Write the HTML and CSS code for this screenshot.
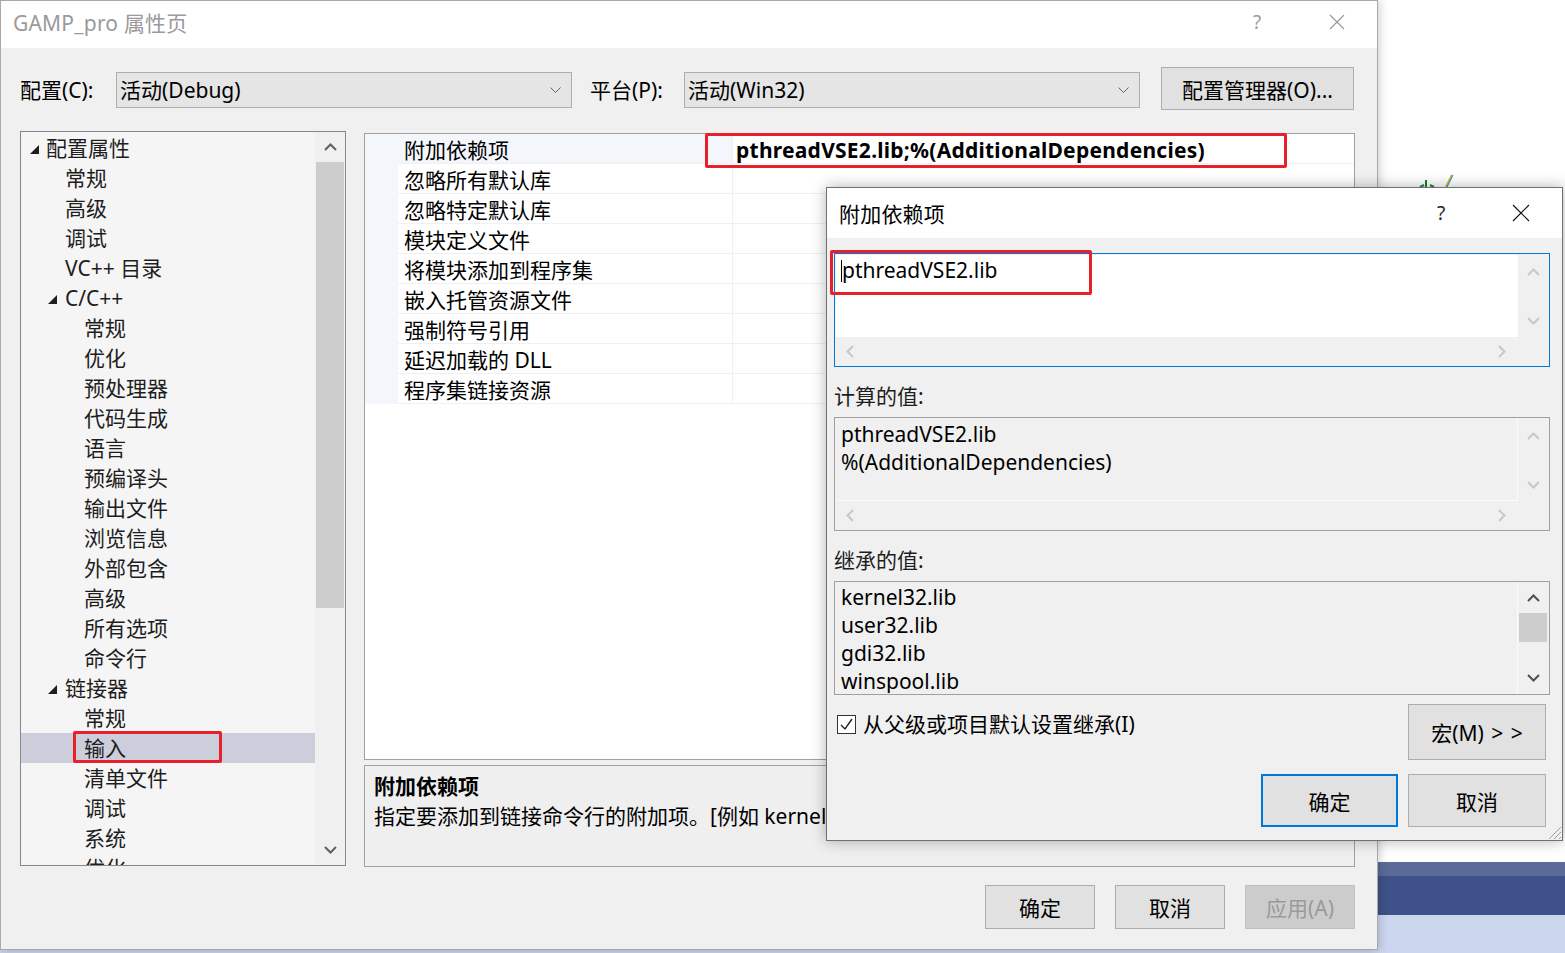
FILE: index.html
```html
<!DOCTYPE html>
<html lang="zh-CN">
<head>
  <meta charset="UTF-8" />
  <title>GAMP_pro 属性页</title>
  <link rel="stylesheet" href="styles.css">
</head>
<body>
<div class="desk">
  <svg class="desk-mark" width="40" height="16" viewBox="0 0 40 16">
    <path d="M4 15 L8 13" stroke="#1f8a3a" stroke-width="2" />
    <path d="M10 8 L10 15" stroke="#1a7a30" stroke-width="2" />
    <path d="M14 13 L18 15" stroke="#1f8a3a" stroke-width="2" />
    <path d="M30 15 L36 3" stroke="#c6b81e" stroke-width="2" />
    <path d="M31 15 L37 3" stroke="#2a8fd0" stroke-width="1" />
  </svg>
  <div class="desk-band"></div>

  <!-- 属性页 -->
  <div class="win win-main">
    <div class="titlebar">
      <span class="title dim">GAMP_pro 属性页</span>
      <span class="tb-help dim">?</span>
      <span class="tb-close">
        <svg width="16" height="16" viewBox="0 0 16 16"><path d="M1 1 L15 15 M15 1 L1 15" stroke="#9a9a9a" stroke-width="1.2" /></svg>
      </span>
    </div>

    <div class="config-row">
      <span class="cfg-label">配置(C):</span>
      <div class="combo">
        <span>活动(Debug)</span>
        <svg width="11" height="7" viewBox="0 0 11 7"><path d="M0.5 0.5 L5.5 5.5 L10.5 0.5" fill="none" stroke="#606060" /></svg>
      </div>
      <span class="cfg-label plat">平台(P):</span>
      <div class="combo">
        <span>活动(Win32)</span>
        <svg width="11" height="7" viewBox="0 0 11 7"><path d="M0.5 0.5 L5.5 5.5 L10.5 0.5" fill="none" stroke="#606060" /></svg>
      </div>
      <button class="btn btn-mgr">配置管理器(O)...</button>
    </div>

    <div class="main-area">
      <div class="tree">
        <ul class="tree-list">
          <li class="lv0"><i class="tri"></i>配置属性</li>
          <li class="lv1">常规</li>
          <li class="lv1">高级</li>
          <li class="lv1">调试</li>
          <li class="lv1">VC++ 目录</li>
          <li class="lv1 open"><i class="tri"></i>C/C++</li>
          <li class="lv2">常规</li>
          <li class="lv2">优化</li>
          <li class="lv2">预处理器</li>
          <li class="lv2">代码生成</li>
          <li class="lv2">语言</li>
          <li class="lv2">预编译头</li>
          <li class="lv2">输出文件</li>
          <li class="lv2">浏览信息</li>
          <li class="lv2">外部包含</li>
          <li class="lv2">高级</li>
          <li class="lv2">所有选项</li>
          <li class="lv2">命令行</li>
          <li class="lv1 open"><i class="tri"></i>链接器</li>
          <li class="lv2">常规</li>
          <li class="lv2 sel">输入</li>
          <li class="lv2">清单文件</li>
          <li class="lv2">调试</li>
          <li class="lv2">系统</li>
          <li class="lv2">优化</li>
        </ul>
        <div class="vscroll">
          <div class="sb-btn">
            <svg width="13" height="8" viewBox="0 0 13 8"><path d="M1 7 L6.5 1.5 L12 7" fill="none" stroke="#606060" stroke-width="2" /></svg>
          </div>
          <div class="sb-thumb tall"></div>
          <div class="sb-track"></div>
          <div class="sb-btn">
            <svg width="13" height="8" viewBox="0 0 13 8"><path d="M1 1 L6.5 6.5 L12 1" fill="none" stroke="#606060" stroke-width="2" /></svg>
          </div>
        </div>
      </div>

      <div class="right-col">
        <div class="grid">
          <div class="grid-row sel">
            <div class="gutter"></div>
            <div class="name">附加依赖项</div>
            <div class="val">pthreadVSE2.lib;%(AdditionalDependencies)</div>
          </div>
          <div class="grid-row"><div class="gutter"></div><div class="name">忽略所有默认库</div><div class="val"></div></div>
          <div class="grid-row"><div class="gutter"></div><div class="name">忽略特定默认库</div><div class="val"></div></div>
          <div class="grid-row"><div class="gutter"></div><div class="name">模块定义文件</div><div class="val"></div></div>
          <div class="grid-row"><div class="gutter"></div><div class="name">将模块添加到程序集</div><div class="val"></div></div>
          <div class="grid-row"><div class="gutter"></div><div class="name">嵌入托管资源文件</div><div class="val"></div></div>
          <div class="grid-row"><div class="gutter"></div><div class="name">强制符号引用</div><div class="val"></div></div>
          <div class="grid-row"><div class="gutter"></div><div class="name">延迟加载的 DLL</div><div class="val"></div></div>
          <div class="grid-row"><div class="gutter"></div><div class="name">程序集链接资源</div><div class="val"></div></div>
        </div>
        <div class="desc">
          <div class="desc-title">附加依赖项</div>
          <div class="desc-text">指定要添加到链接命令行的附加项。[例如 kernel32.lib]</div>
        </div>
      </div>
    </div>

    <div class="footer">
      <button class="btn btn-foot">确定</button>
      <button class="btn btn-foot">取消</button>
      <button class="btn btn-foot disabled">应用(A)</button>
    </div>
  </div>

  <!-- 附加依赖项 对话框 -->
  <div class="win win-sub">
    <div class="titlebar sub-bar">
      <span class="title">附加依赖项</span>
      <span class="tb-help">?</span>
      <span class="tb-close">
        <svg width="18" height="18" viewBox="0 0 18 18"><path d="M1 1 L17 17 M17 1 L1 17" stroke="#111" stroke-width="1.2" /></svg>
      </span>
    </div>
    <div class="sub-body">
      <div class="lbox focus">
        <div class="lbox-text"><span class="caret"></span>pthreadVSE2.lib</div>
        <div class="lbox-v">
          <svg width="13" height="8" viewBox="0 0 13 8"><path d="M1 7 L6.5 1.5 L12 7" fill="none" stroke="#c8c8c8" stroke-width="2" /></svg>
          <svg width="13" height="8" viewBox="0 0 13 8"><path d="M1 1 L6.5 6.5 L12 1" fill="none" stroke="#c8c8c8" stroke-width="2" /></svg>
        </div>
        <div class="lbox-h">
          <svg width="8" height="13" viewBox="0 0 8 13"><path d="M7 1 L1.5 6.5 L7 12" fill="none" stroke="#c8c8c8" stroke-width="2" /></svg>
          <svg width="8" height="13" viewBox="0 0 8 13"><path d="M1 1 L6.5 6.5 L1 12" fill="none" stroke="#c8c8c8" stroke-width="2" /></svg>
        </div>
      </div>

      <div class="sub-label">计算的值:</div>
      <div class="lbox ro">
        <div class="lbox-text">pthreadVSE2.lib<br>%(AdditionalDependencies)</div>
        <div class="lbox-v">
          <svg width="13" height="8" viewBox="0 0 13 8"><path d="M1 7 L6.5 1.5 L12 7" fill="none" stroke="#c8c8c8" stroke-width="2" /></svg>
          <svg width="13" height="8" viewBox="0 0 13 8"><path d="M1 1 L6.5 6.5 L12 1" fill="none" stroke="#c8c8c8" stroke-width="2" /></svg>
        </div>
        <div class="lbox-h">
          <svg width="8" height="13" viewBox="0 0 8 13"><path d="M7 1 L1.5 6.5 L7 12" fill="none" stroke="#c8c8c8" stroke-width="2" /></svg>
          <svg width="8" height="13" viewBox="0 0 8 13"><path d="M1 1 L6.5 6.5 L1 12" fill="none" stroke="#c8c8c8" stroke-width="2" /></svg>
        </div>
      </div>

      <div class="sub-label">继承的值:</div>
      <div class="lbox list">
        <div class="lbox-text">kernel32.lib<br>user32.lib<br>gdi32.lib<br>winspool.lib</div>
        <div class="vscroll small">
          <div class="sb-btn">
            <svg width="13" height="8" viewBox="0 0 13 8"><path d="M1 7 L6.5 1.5 L12 7" fill="none" stroke="#505050" stroke-width="2" /></svg>
          </div>
          <div class="sb-thumb"></div>
          <div class="sb-track"></div>
          <div class="sb-btn">
            <svg width="13" height="8" viewBox="0 0 13 8"><path d="M1 1 L6.5 6.5 L12 1" fill="none" stroke="#505050" stroke-width="2" /></svg>
          </div>
        </div>
      </div>

      <div class="sub-opts">
        <label class="inherit">
          <span class="check">
            <svg width="17" height="17" viewBox="0 0 17 17"><path d="M3 9 L7 13 L14 3" fill="none" stroke="#222" stroke-width="1.4" /></svg>
          </span>
          <span>从父级或项目默认设置继承(I)</span>
        </label>
        <button class="btn btn-macro">宏(M) &gt; &gt;</button>
      </div>

      <div class="sub-actions">
        <button class="btn btn-dlg default">确定</button>
        <button class="btn btn-dlg">取消</button>
      </div>

      <svg class="grip" width="17" height="17" viewBox="0 0 17 17">
        <path d="M16 4 L4 16 M16 9 L9 16 M16 14 L14 16" stroke="#a0a0a0" stroke-width="1" />
      </svg>
    </div>
  </div>

  <!-- 红框标注 -->
  <div class="mark mark-val"></div>
  <div class="mark mark-tree"></div>
  <div class="mark mark-edit"></div>
</div>
</body>
</html>
```

FILE: styles.css
```css
* {
  box-sizing: border-box;
}

body {
  margin: 0;
  font-family: "Noto Sans", "Noto Sans CJK SC", sans-serif;
  font-size: 21px;
  color: #000;
  background: #fff;
}

.desk {
  position: relative;
  width: 1565px;
  height: 953px;
  overflow: hidden;
  background: #fff;
}

.desk-band {
  position: absolute;
  left: 0;
  right: 0;
  top: 862px;
  bottom: 0;
  background: linear-gradient(#5b6a98 0, #5b6a98 14px, #3f5189 14px, #3f5189 53px, #cdd6ef 53px);
}

.desk-mark {
  position: absolute;
  left: 1416px;
  top: 172px;
}

/* windows */
.win {
  position: absolute;
  display: flex;
  flex-direction: column;
  background: #f0f0f0;
}

.win-main {
  left: 0;
  top: 0;
  width: 1378px;
  height: 950px;
  border: 1px solid #a8a8a8;
  box-shadow: 0 0 10px rgba(0,0,0,0.25);
}

.win-sub {
  left: 826px;
  top: 187px;
  width: 737px;
  height: 654px;
  border: 1px solid #707070;
  box-shadow: 0 0 14px rgba(0,0,0,0.3);
}

.titlebar {
  flex: none;
  height: 47px;
  display: flex;
  align-items: center;
  background: #fff;
  padding-right: 20px;
}

.titlebar .title {
  flex: 1;
  padding-left: 12px;
  margin-top: -5px;
  letter-spacing: 0.2px;
}

.dim {
  color: #9a9a9a;
}

.tb-help {
  width: 40px;
  margin-right: 40px;
  text-align: center;
  font-size: 19px;
  margin-top: -5px;
}

.tb-close {
  width: 40px;
  display: flex;
  justify-content: center;
  margin-top: -5px;
}

.sub-bar {
  height: 50px;
  padding-right: 21px;
}

.sub-bar .title,
.sub-bar .tb-help,
.sub-bar .tb-close {
  margin-top: 0;
}

.sub-bar .tb-help {
  color: #222;
}

/* config row */
.config-row {
  flex: none;
  display: flex;
  align-items: center;
  height: 43px;
  margin-top: 19px;
  padding-left: 19px;
}

.cfg-label {
  width: 96px;
  flex: none;
}

.cfg-label.plat {
  margin-left: 18px;
  width: 94px;
}

.combo {
  width: 456px;
  height: 36px;
  flex: none;
  display: flex;
  align-items: center;
  justify-content: space-between;
  padding: 0 10px 0 3px;
  border: 1px solid #adadad;
  background: #e5e5e5;
  margin-top: 3px;
}

.combo span {
  margin-top: -2px;
}

.btn {
  font: inherit;
  color: #000;
  background: #e1e1e1;
  border: 1px solid #adadad;
  padding: 0;
  cursor: pointer;
}

.btn-mgr {
  width: 193px;
  height: 43px;
  margin-left: 21px;
}

/* tree + grid */
.main-area {
  flex: none;
  display: flex;
  align-items: flex-start;
  margin-top: 21px;
  padding-left: 19px;
}

.tree {
  width: 326px;
  height: 735px;
  flex: none;
  display: flex;
  border: 1px solid #828790;
  background: #f5f5f5;
  overflow: hidden;
}

.tree-list {
  flex: 1;
  list-style: none;
  margin: 0;
  padding: 1px 0 0;
  overflow: hidden;
}

.tree-list li {
  height: 30px;
  line-height: 30px;
  display: flex;
  align-items: center;
  white-space: nowrap;
  color: #1e1e1e;
}

.tree-list .lv0 { padding-left: 9px; }
.tree-list .lv1 { padding-left: 44px; }
.tree-list .lv1.open { padding-left: 27px; }
.tree-list .lv2 { padding-left: 63px; }

.tree-list .sel {
  background: #cccedb;
}

.tri {
  width: 0;
  height: 0;
  border-style: solid;
  border-width: 0 0 9px 9px;
  border-color: transparent transparent #1e1e1e transparent;
  margin: 2px 7px 0 0;
}

.tree-list .lv1.open .tri {
  margin-right: 8px;
}

.vscroll {
  width: 30px;
  flex: none;
  display: flex;
  flex-direction: column;
  background: #f0f0f0;
}

.sb-btn {
  height: 30px;
  flex: none;
  display: flex;
  align-items: center;
  justify-content: center;
}

.sb-thumb {
  height: 29px;
  flex: none;
  background: #cdcdcd;
  margin: 0 1px;
}

.sb-thumb.tall {
  height: 446px;
}

.sb-track {
  flex: 1;
}

.right-col {
  width: 991px;
  flex: none;
  margin-left: 18px;
  margin-top: 2px;
}

.grid {
  height: 627px;
  border: 1px solid #a0a0a0;
  background: #fff;
}

.grid-row {
  display: flex;
  height: 30px;
}

.gutter {
  width: 33px;
  flex: none;
  background: #f3f6fb;
}

.grid-row .name {
  width: 335px;
  flex: none;
  padding: 3px 0 0 6px;
  line-height: 26px;
  border-right: 1px solid #f0f0f0;
  border-bottom: 1px solid #f0f0f0;
  white-space: nowrap;
}

.grid-row .val {
  flex: 1;
  padding: 3px 0 0 3px;
  line-height: 26px;
  border-bottom: 1px solid #f0f0f0;
  white-space: nowrap;
}

.grid-row.sel .name {
  background: #f3f6fb;
}

.grid-row.sel .val {
  font-weight: bold;
  letter-spacing: 0.25px;
}

.desc {
  height: 102px;
  margin-top: 5px;
  padding: 5px 9px;
  border: 1px solid #a0a0a0;
  background: #efefef;
  line-height: 30px;
  white-space: nowrap;
  overflow: hidden;
}

.desc-title {
  font-weight: bold;
}

.footer {
  flex: none;
  display: flex;
  justify-content: flex-end;
  gap: 20px;
  margin-top: 18px;
  padding-right: 22px;
}

.btn-foot {
  width: 110px;
  height: 44px;
}

.btn.disabled {
  background: #cccccc;
  border-color: #bfbfbf;
  color: #9a9a9a;
}

/* 附加依赖项 dialog */
.sub-body {
  flex: 1;
  position: relative;
  display: flex;
  flex-direction: column;
  padding: 15px 12px 0 7px;
}

.lbox {
  height: 114px;
  flex: none;
  display: grid;
  grid-template-columns: 1fr 30px;
  grid-template-rows: 1fr 28px;
  padding: 1px;
  border: 1px solid #a0a0a0;
  background: #f0f0f0;
}

.lbox.focus {
  border-color: #0078d7;
}

.lbox-text {
  padding: 1px 5px;
  line-height: 28px;
  white-space: nowrap;
  overflow: hidden;
}

.lbox.focus .lbox-text {
  background: #fff;
}

.lbox.ro .lbox-text {
  border-right: 1px solid #fbfbfb;
  border-bottom: 1px solid #fbfbfb;
}

.lbox.list {
  grid-template-rows: 1fr;
}

.lbox.list .lbox-text {
  padding-top: 0;
  border-right: 1px solid #fbfbfb;
}

.caret {
  display: inline-block;
  width: 0;
  height: 22px;
  border-left: 1px solid #000;
  vertical-align: middle;
  margin: -3px 0 0 0;
}

.lbox-v {
  display: flex;
  flex-direction: column;
  align-items: center;
  justify-content: space-between;
  padding: 13px 0 12px;
}

.lbox-h {
  display: flex;
  align-items: center;
  justify-content: space-between;
  padding: 0 12px 0 10px;
}

.sub-label {
  line-height: 28px;
  margin: 15px 0 7px;
  color: #1e1e1e;
}

.sub-opts {
  flex: none;
  display: flex;
  height: 56px;
  margin-top: 9px;
  padding-right: 4px;
}

.inherit {
  flex: 1;
  display: flex;
  align-items: center;
  gap: 7px;
  height: 30px;
  line-height: 30px;
  margin-top: 5px;
  padding-left: 3px;
  white-space: nowrap;
}

.check {
  width: 19px;
  height: 19px;
  flex: none;
  display: flex;
  align-items: center;
  justify-content: center;
  border: 1px solid #333;
  background: #fff;
}

.btn-macro {
  width: 138px;
  height: 56px;
  word-spacing: 2px;
}

.sub-actions {
  flex: none;
  display: flex;
  justify-content: flex-end;
  gap: 10px;
  margin-top: 14px;
  padding-right: 4px;
}

.btn-dlg {
  width: 138px;
  height: 53px;
}

.btn-dlg.default {
  width: 137px;
  border: 2px solid #0078d7;
}

.grip {
  position: absolute;
  right: 0;
  bottom: 0;
}

/* red annotation boxes */
.mark {
  position: absolute;
  border: 3px solid #e8202c;
  border-radius: 2px;
}

.mark-val {
  left: 705px;
  top: 133px;
  width: 582px;
  height: 35px;
}

.mark-tree {
  left: 73px;
  top: 731px;
  width: 149px;
  height: 32px;
}

.mark-edit {
  left: 830px;
  top: 250px;
  width: 262px;
  height: 45px;
}
```
